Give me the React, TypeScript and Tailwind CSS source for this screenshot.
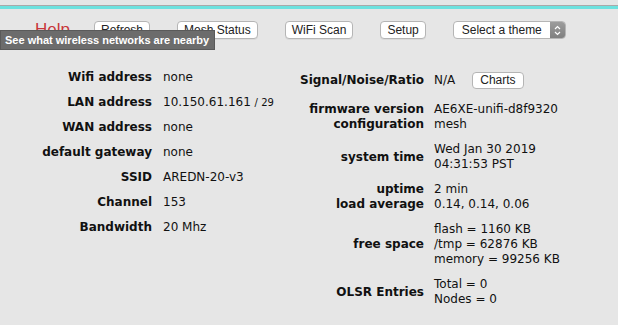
import React from "react";

const verdana = { fontFamily: '"DejaVu Sans", Verdana, sans-serif' };
const helv = { fontFamily: '"Liberation Sans", Arial, sans-serif' };

function Btn({ children }: { children: React.ReactNode }) {
  return (
    <button
      className="h-[18px] px-[6px] rounded-[4px] border border-[#b5b5b5] bg-white text-[12px] leading-[16px] text-[#222] shadow-[0_1px_0_rgba(0,0,0,0.05)]"
      style={helv}
    >
      {children}
    </button>
  );
}

const leftRows: [string, React.ReactNode][] = [
  ["Wifi address", "none"],
  [
    "LAN address",
    <>
      10.150.61.161 <span className="text-[10px]">/ 29</span>
    </>,
  ],
  ["WAN address", "none"],
  ["default gateway", "none"],
  ["SSID", "AREDN-20-v3"],
  ["Channel", "153"],
  ["Bandwidth", "20 Mhz"],
];

function RightRow({ label, lines }: { label: React.ReactNode; lines: React.ReactNode[] }) {
  return (
    <div className="flex items-center">
      <div className="w-[134px] text-right font-bold leading-[15px]">{label}</div>
      <div className="pl-[10px] leading-[15px]">
        {lines.map((l, i) => (
          <div key={i}>{l}</div>
        ))}
      </div>
    </div>
  );
}

export default function App() {
  return (
    <div className="relative w-[618px] h-[325px] bg-[#e6e6e6] overflow-hidden text-[12px] text-[#111]" style={verdana}>
      {/* top rule */}
      <div className="pt-[5px]">
        <div className="h-px bg-[#a9a9a9]" />
        <div className="h-[3px] bg-[#6ee2df]" />
      </div>

      {/* nav */}
      <div className="flex items-center gap-[27px] pl-[35px] pt-[12px] h-[30px]">
        <span className="text-[17px] leading-[18px] text-[#c8363a] mr-[-3px]" style={helv}>
          Help
        </span>
        <Btn>Refresh</Btn>
        <Btn>Mesh Status</Btn>
        <Btn>WiFi Scan</Btn>
        <Btn>Setup</Btn>
        <div
          className="flex items-center h-[18px] w-[113px] rounded-[4px] border border-[#b5b5b5] bg-white overflow-hidden text-[12px] text-[#222]"
          style={helv}
        >
          <span className="flex-1 pl-[8px]">Select a theme</span>
          <span className="flex items-center justify-center w-[15px] h-full bg-gradient-to-b from-[#9c9c9c] to-[#808080]">
            <svg width="7" height="11" viewBox="0 0 7 11" fill="none" stroke="white" strokeWidth="1.2">
              <path d="M1 4 L3.5 1.5 L6 4" />
              <path d="M1 7 L3.5 9.5 L6 7" />
            </svg>
          </span>
        </div>
      </div>

      {/* tooltip */}
      <div
        className="absolute left-0 top-[30px] h-[20px] w-[215px] bg-[#6c6c6c] border border-[#5a5a5a] text-white text-[11px] font-bold leading-[18px] pl-[4px]"
        style={helv}
      >
        See what wireless networks are nearby
      </div>

      {/* content */}
      <div className="flex pt-[25px]">
        <div className="pl-[40px] w-[290px]">
          {leftRows.map(([k, v]) => (
            <div key={k} className="flex items-center h-[25px]">
              <div className="w-[112px] text-right font-bold">{k}</div>
              <div className="pl-[11px]">{v}</div>
            </div>
          ))}
        </div>
        <div className="flex flex-col gap-[10px] pt-[4px]">
          <div className="flex items-center h-[24px]">
            <div className="w-[134px] text-right font-bold">Signal/Noise/Ratio</div>
            <div className="pl-[10px] flex items-center">
              <span>N/A</span>
              <span className="ml-[17px]">
                <button
                  className="h-[17px] px-[7px] rounded-[4px] border border-[#b5b5b5] bg-white text-[12px] leading-[15px] text-[#222]"
                  style={helv}
                >
                  Charts
                </button>
              </span>
            </div>
          </div>
          <div className="flex">
            <div className="w-[134px] text-right font-bold leading-[15px]">
              <div>firmware version</div>
              <div>configuration</div>
            </div>
            <div className="pl-[10px] leading-[15px]">
              <div>AE6XE-unifi-d8f9320</div>
              <div>mesh</div>
            </div>
          </div>
          <RightRow label="system time" lines={["Wed Jan 30 2019", "04:31:53 PST"]} />
          <div className="flex">
            <div className="w-[134px] text-right font-bold leading-[15px]">
              <div>uptime</div>
              <div>load average</div>
            </div>
            <div className="pl-[10px] leading-[15px]">
              <div>2 min</div>
              <div>0.14, 0.14, 0.06</div>
            </div>
          </div>
          <RightRow
            label="free space"
            lines={["flash = 1160 KB", "/tmp = 62876 KB", "memory = 99256 KB"]}
          />
          <RightRow label="OLSR Entries" lines={["Total = 0", "Nodes = 0"]} />
        </div>
      </div>
    </div>
  );
}
